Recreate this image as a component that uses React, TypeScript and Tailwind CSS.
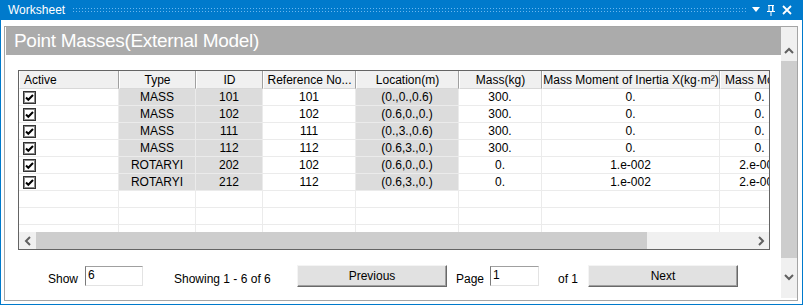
import { ReactNode } from "react";

interface Column {
  title: string;
  width: string;
  align: "left" | "center";
  shaded?: boolean;
}

const columns: Column[] = [
  { title: "Active", width: "w-[100px]", align: "left" },
  { title: "Type", width: "w-[77px]", align: "center", shaded: true },
  { title: "ID", width: "w-[67px]", align: "center", shaded: true },
  { title: "Reference No...", width: "w-[93px]", align: "center" },
  { title: "Location(m)", width: "w-[103px]", align: "center", shaded: true },
  { title: "Mass(kg)", width: "w-[83px]", align: "center" },
  { title: "Mass Moment of Inertia X(kg·m²)", width: "w-[178px]", align: "center" },
  { title: "Mass Moment of Inertia Y(kg·m²)", width: "w-[80px]", align: "left" },
];

const rows: string[][] = [
  ["MASS", "101", "101", "(0.,0.,0.6)", "300.", "0.", "0."],
  ["MASS", "102", "102", "(0.6,0.,0.)", "300.", "0.", "0."],
  ["MASS", "111", "111", "(0.,3.,0.6)", "300.", "0.", "0."],
  ["MASS", "112", "112", "(0.6,3.,0.)", "300.", "0.", "0."],
  ["ROTARYI", "202", "102", "(0.6,0.,0.)", "0.", "1.e-002", "2.e-002"],
  ["ROTARYI", "212", "112", "(0.6,3.,0.)", "0.", "1.e-002", "2.e-002"],
];

const CheckBox = () => (
  <svg width="13" height="13" viewBox="0 0 13 13">
    <rect x="0.5" y="0.5" width="12" height="12" fill="#fff" stroke="#333" />
    <rect x="1.5" y="1.5" width="10" height="10" fill="none" stroke="#8a8a8a" />
    <path d="M3 6.5 L5.3 8.8 L10 4" fill="none" stroke="#000" strokeWidth="2" />
  </svg>
);

const Chevron = ({ dir }: { dir: "up" | "down" | "left" | "right" }) => {
  const d = {
    up: "M1 6 L5 2 L9 6",
    down: "M1 2 L5 6 L9 2",
    left: "M6 1 L2 5 L6 9",
    right: "M2 1 L6 5 L2 9",
  }[dir];
  const horizontal = dir === "up" || dir === "down";
  return (
    <svg width={horizontal ? 10 : 8} height={horizontal ? 8 : 10} viewBox={horizontal ? "0 0 10 8" : "0 0 8 10"}>
      <path d={d} fill="none" stroke="#606060" strokeWidth="2" />
    </svg>
  );
};

const Label = ({ children, className }: { children: ReactNode; className: string }) => (
  <span className={`mt-[6px] text-[12px] leading-[16px] text-black whitespace-nowrap ${className}`}>{children}</span>
);

const Button = ({ children }: { children: ReactNode }) => (
  <div className="w-[150px] h-[22px] bg-[#e1e1e1] border border-t-[#f4f4f4] border-l-[#f4f4f4] border-b-[#696969] border-r-[#696969] shadow-[inset_-1px_-1px_0_#a0a0a0] flex justify-center pt-[2px] text-[12px] leading-[16px] text-black">
    {children}
  </div>
);

const Field = ({ value, width }: { value: string; width: string }) => (
  <div className={`${width} h-[20px] mt-[1px] bg-white border border-t-[#a0a0a0] border-l-[#7a7a7a] border-b-[#e3e3e3] border-r-[#e3e3e3] pl-[2px] text-[12px] leading-[16px] text-black`}>
    {value}
  </div>
);

export default function App() {
  return (
    <div className="w-[803px] h-[305px] bg-[#007acc] flex flex-col overflow-hidden font-['Liberation_Sans',Arial,sans-serif]">
      {/* TITLE BAR */}
      <div className="h-[20px] shrink-0 flex items-center pl-[8px] pr-[11px]">
        <span className="text-[12px] leading-[16px] text-white">Worksheet</span>
        <div className="flex-1 h-[6px] ml-[7px] mr-[6px] bg-[radial-gradient(circle,#6ab6ef_0.7px,transparent_0.9px)] bg-[length:3px_3px]"></div>
        <div className="flex items-center gap-[7px]">
          <svg width="8" height="6" viewBox="0 0 8 6">
            <path d="M0 0 H8 L4 5 Z" fill="#fff" />
          </svg>
          <svg width="8" height="11" viewBox="0 0 8 11">
            <path d="M1 0.5 H7 M2 1 V6 M5.5 1 V6 M0 6.5 H8 M4 6.5 V11" fill="none" stroke="#fff" strokeWidth="1" />
            <rect x="5" y="1" width="1.5" height="5.5" fill="#fff" />
          </svg>
          <svg width="10" height="10" viewBox="0 0 10 10">
            <path d="M1 1 L9 9 M9 1 L1 9" stroke="#fff" strokeWidth="1.8" />
          </svg>
        </div>
      </div>

      {/* CONTENT */}
      <div className="flex-1 mx-[1px] mb-[1px] bg-white pt-[6px] pl-[3px] pr-[4px] pb-[3px] flex">
        <div className="flex-1 border border-[#a5a5a5] flex">
          {/* MAIN COLUMN */}
          <div className="w-[776px] flex flex-col">
            <div className="h-[28px] ml-[1px] bg-[#ababab] pl-[8px] text-[19px] leading-[28px] tracking-[-0.3px] text-white whitespace-nowrap">
              Point Masses(External Model)
            </div>

            {/* TABLE */}
            <div className="mt-[15px] ml-[13px] w-[752px] h-[180px] border border-[#646464] flex flex-col overflow-hidden">
              <div className="h-[18px] shrink-0 flex">
                {columns.map((col, i) => (
                  <div
                    key={i}
                    className={`${col.width} shrink-0 h-full bg-[#f0f0f0] border-r border-r-[#a0a0a0] border-l border-l-white border-b border-b-[#d8d8d8] flex items-center overflow-hidden whitespace-nowrap text-[12px] leading-[16px] text-black ${col.align === "left" ? "pl-[4px]" : "justify-center"}`}
                  >
                    {col.title}
                  </div>
                ))}
              </div>

              <div className="flex-1 overflow-hidden">
                {rows.map((row, r) => (
                  <div key={r} className="h-[17px] flex">
                    {columns.map((col, i) => (
                      <div
                        key={i}
                        className={`${col.width} shrink-0 h-full border-r border-b border-[#ebebeb] flex items-center overflow-hidden whitespace-nowrap text-[12px] leading-[16px] text-black ${col.shaded ? "bg-[#dcdcdc]" : "bg-white"} ${i === 0 ? "pl-[4px]" : "justify-center"}`}
                      >
                        {i === 0 ? <CheckBox /> : row[i - 1]}
                      </div>
                    ))}
                  </div>
                ))}
                {[0, 1, 2].map((r) => (
                  <div key={`e${r}`} className="h-[17px] flex">
                    {columns.map((col, i) => (
                      <div key={i} className={`${col.width} shrink-0 h-full border-r border-b border-[#ebebeb] bg-white`}></div>
                    ))}
                  </div>
                ))}
              </div>

              {/* HORIZONTAL SCROLLBAR */}
              <div className="h-[17px] shrink-0 bg-[#f0f0f0] flex">
                <div className="w-[17px] flex items-center justify-center">
                  <Chevron dir="left" />
                </div>
                <div className="w-[611px] bg-[#cdcdcd]"></div>
                <div className="flex-1"></div>
                <div className="w-[17px] flex items-center justify-center">
                  <Chevron dir="right" />
                </div>
              </div>
            </div>

            {/* PAGINATION */}
            <div className="mt-[15px] flex items-start">
              <Label className="ml-[43px] w-[37px]">Show</Label>
              <Field value="6" width="w-[58px]" />
              <Label className="ml-[31px] w-[123px]">Showing 1 - 6 of 6</Label>
              <Button>Previous</Button>
              <Label className="ml-[9px] w-[34px]">Page</Label>
              <Field value="1" width="w-[49px]" />
              <Label className="ml-[19px] w-[30px]">of 1</Label>
              <Button>Next</Button>
            </div>
          </div>

          {/* VERTICAL SCROLLBAR */}
          <div className="w-[16px] mb-[2px] bg-[#f0f0f0] flex flex-col">
            <div className="h-[15px]"></div>
            <div className="h-[17px] flex items-center justify-center">
              <Chevron dir="up" />
            </div>
            <div className="h-[197px] mt-[2px] bg-[#cdcdcd]"></div>
            <div className="h-[17px] mt-[10px] flex items-center justify-center">
              <Chevron dir="down" />
            </div>
          </div>
        </div>
      </div>
    </div>
  );
}
